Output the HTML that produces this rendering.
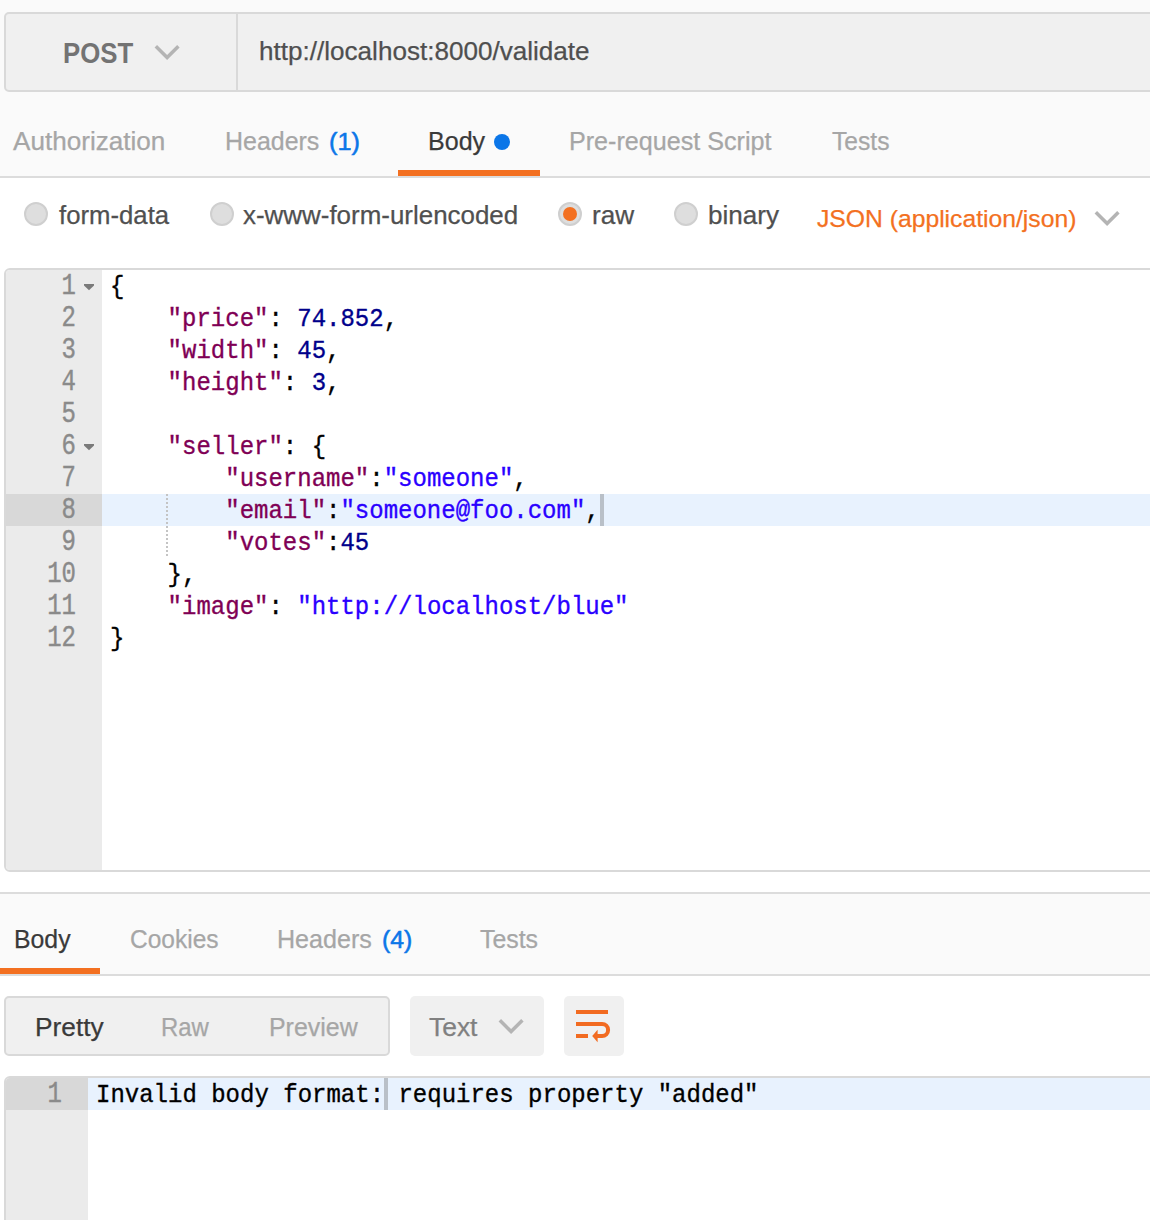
<!DOCTYPE html>
<html><head><meta charset="utf-8">
<style>
*{margin:0;padding:0;box-sizing:border-box}
html,body{width:1150px;height:1220px;overflow:hidden;background:#fff;font-family:"Liberation Sans",sans-serif}
.a{position:absolute}
.t{position:absolute;white-space:pre;line-height:1;transform-origin:0 0;-webkit-text-stroke:0.25px}
.rad{position:absolute;width:24px;height:24px;border-radius:50%;background:#dedede;border:2px solid #cfcfcf}
.code{position:absolute;font-family:"Liberation Mono",monospace;font-size:26px;line-height:32px;white-space:pre;color:#000;transform:scaleX(0.9231);transform-origin:0 0;-webkit-text-stroke:0.35px}
.k{color:#7f0055}.n{color:#00008b}.s{color:#2a00ff}
.ln{position:absolute;font-family:"Liberation Mono",monospace;font-size:29px;line-height:32px;white-space:pre;color:#8a8a8a;text-align:right;transform:scaleX(0.8276);transform-origin:100% 0;-webkit-text-stroke:0.4px}
</style></head><body>
<div class="a" style="left:0;top:0;width:1150px;height:176px;background:#fafafa"></div>
<div class="a" style="left:0;top:176px;width:1150px;height:2px;background:#dcdcdc"></div>
<div class="a" style="left:4px;top:12px;width:1200px;height:80px;background:#f0f0f0;border:2px solid #d9d9d9;border-radius:5px"></div>
<div class="a" style="left:236px;top:14px;width:2px;height:76px;background:#d9d9d9"></div>
<svg class="a" style="left:154px;top:44px" width="28" height="18" viewBox="0 0 28 18"><polyline points="1.8,2.3 13.1,13.6 24.4,2.3" fill="none" stroke="#b4b4b4" stroke-width="3.5"/></svg>
<div class="a" style="left:494px;top:134px;width:16px;height:16px;border-radius:50%;background:#0b76e8"></div>
<div class="a" style="left:398px;top:170px;width:142px;height:6px;background:#f37021"></div>
<div class="rad" style="left:24px;top:202px"></div>
<div class="rad" style="left:210px;top:202px"></div>
<div class="rad" style="left:558px;top:202px"></div>
<div class="a" style="left:562.75px;top:206.75px;width:14.5px;height:14.5px;border-radius:50%;background:#f37021"></div>
<div class="rad" style="left:674px;top:202px"></div>
<svg class="a" style="left:1094px;top:210px" width="28" height="18" viewBox="0 0 28 18"><polyline points="1.8,2.3 13.1,13.6 24.4,2.3" fill="none" stroke="#b4b4b4" stroke-width="3.5"/></svg>
<div class="a" style="left:4px;top:268px;width:1200px;height:604px;border:2px solid #d9d9d9;border-radius:6px;background:#fff;overflow:hidden">
  <div class="a" style="left:0;top:0;width:96px;height:600px;background:#ebebeb"></div>
  <div class="a" style="left:0;top:224px;width:96px;height:32px;background:#d8d8d8"></div>
  <div class="a" style="left:96px;top:224px;width:1100px;height:32px;background:#e8f2fe"></div>
</div>
<div class="ln" style="left:6px;top:270.5px;width:70px">1
2
3
4
5
6
7
8
9
10
11
12</div>
<svg class="a" style="left:83px;top:284px" width="11" height="7"><polygon points="1,0 11,0 11,1.6 6,6.2 1,1.6" fill="#7a7a7a"/></svg>
<svg class="a" style="left:83px;top:444px" width="11" height="7"><polygon points="1,0 11,0 11,1.6 6,6.2 1,1.6" fill="#7a7a7a"/></svg>
<div class="a" style="left:166px;top:494px;width:2px;height:62px;background:repeating-linear-gradient(to bottom,#c4c4c4 0,#c4c4c4 2px,transparent 2px,transparent 4px)"></div>
<div class="code" style="left:110px;top:271px">{
    <span class="k">"price"</span>: <span class="n">74.852</span>,
    <span class="k">"width"</span>: <span class="n">45</span>,
    <span class="k">"height"</span>: <span class="n">3</span>,

    <span class="k">"seller"</span>: {
        <span class="k">"username"</span>:<span class="s">"someone"</span>,
        <span class="k">"email"</span>:<span class="s">"someone@foo.com"</span>,
        <span class="k">"votes"</span>:<span class="n">45</span>
    },
    <span class="k">"image"</span>: <span class="s">"http://localhost/blue"</span>
}</div>
<div class="a" style="left:600px;top:494px;width:4px;height:32px;background:#b9c0c8"></div>
<div class="a" style="left:0;top:892px;width:1150px;height:2px;background:#dcdcdc"></div>
<div class="a" style="left:0;top:894px;width:1150px;height:80px;background:#fafafa"></div>
<div class="a" style="left:0;top:974px;width:1150px;height:2px;background:#dcdcdc"></div>
<div class="a" style="left:0;top:968px;width:100px;height:6px;background:#f37021"></div>
<div class="a" style="left:4px;top:996px;width:386px;height:60px;background:#f0f0f0;border:2px solid #d9d9d9;border-radius:5px"></div>
<div class="a" style="left:410px;top:996px;width:134px;height:60px;background:#f0f0f0;border-radius:5px"></div>
<svg class="a" style="left:498px;top:1018px" width="28" height="18" viewBox="0 0 28 18"><polyline points="1.8,2.3 13.1,13.6 24.4,2.3" fill="none" stroke="#b4b4b4" stroke-width="3.5"/></svg>
<div class="a" style="left:564px;top:996px;width:60px;height:60px;background:#f0f0f0;border-radius:5px"></div>
<svg class="a" style="left:564px;top:996px" width="60" height="60" viewBox="0 0 60 60">
  <rect x="12" y="14" width="32" height="4" fill="#f26b21"/>
  <path d="M12 28 H38.1 A6 6 0 0 1 38.1 40 H32" fill="none" stroke="#f26b21" stroke-width="4"/>
  <rect x="12" y="38" width="12" height="4" fill="#f26b21"/>
  <polygon points="28.2,40 33.6,33.8 33.6,46.2" fill="#f26b21"/>
</svg>
<div class="a" style="left:4px;top:1076px;width:1200px;height:200px;border:2px solid #d9d9d9;border-radius:6px;background:#fff;overflow:hidden">
  <div class="a" style="left:0;top:0;width:82px;height:200px;background:#ebebeb"></div>
  <div class="a" style="left:0;top:0;width:82px;height:32px;background:#d8d8d8"></div>
  <div class="a" style="left:82px;top:0;width:1100px;height:32px;background:#e8f2fe"></div>
</div>
<div class="ln" style="left:6px;top:1078.5px;width:56px">1</div>
<div class="code" style="left:96px;top:1079px">Invalid body format: requires property "added"</div>
<div class="a" style="left:384px;top:1078px;width:4px;height:32px;background:#b9c0c8"></div>
<div class="t" id="post" style="left:62.75px;top:39.45px;font-size:29px;font-weight:bold;color:#737373;transform:scaleX(0.8897);-webkit-text-stroke:0">POST</div>
<div class="t" id="url" style="left:258.59px;top:37.99px;font-size:26px;font-weight:normal;color:#4f4f4f;transform:scaleX(1.0031)">http://localhost:8000/validate</div>
<div class="t" id="auth" style="left:13.40px;top:129.41px;font-size:25.5px;font-weight:normal;color:#a6a6a6;transform:scaleX(1.0238)">Authorization</div>
<div class="t" id="hdr1" style="left:225.45px;top:129.41px;font-size:25.5px;font-weight:normal;color:#a6a6a6;transform:scaleX(0.9786)">Headers</div>
<div class="t" id="hdr1n" style="left:328.96px;top:131.03px;font-size:23px;font-weight:normal;color:#0b76e8;transform:scaleX(1.0977);-webkit-text-stroke:0.5px">(1)</div>
<div class="t" id="body1" style="left:427.64px;top:129.41px;font-size:25.5px;font-weight:normal;color:#3a3a3a;transform:scaleX(0.9821)">Body</div>
<div class="t" id="pre" style="left:569.43px;top:129.41px;font-size:25.5px;font-weight:normal;color:#a6a6a6;transform:scaleX(0.9852)">Pre-request Script</div>
<div class="t" id="tests1" style="left:832.20px;top:129.41px;font-size:25.5px;font-weight:normal;color:#a6a6a6;transform:scaleX(0.9658)">Tests</div>
<div class="t" id="fd" style="left:58.59px;top:203.41px;font-size:25.5px;font-weight:normal;color:#505050;transform:scaleX(1.0092)">form-data</div>
<div class="t" id="xw" style="left:243.39px;top:203.41px;font-size:25.5px;font-weight:normal;color:#505050;transform:scaleX(1.0168)">x-www-form-urlencoded</div>
<div class="t" id="raw" style="left:591.55px;top:203.41px;font-size:25.5px;font-weight:normal;color:#505050;transform:scaleX(1.0259)">raw</div>
<div class="t" id="bin" style="left:707.57px;top:203.41px;font-size:25.5px;font-weight:normal;color:#505050;transform:scaleX(1.0222)">binary</div>
<div class="t" id="json" style="left:816.60px;top:207.26px;font-size:24.5px;font-weight:normal;color:#f37021;transform:scaleX(1.0078)">JSON (application/json)</div>
<div class="t" id="body2" style="left:13.86px;top:927.41px;font-size:25.5px;font-weight:normal;color:#3a3a3a;transform:scaleX(0.9734)">Body</div>
<div class="t" id="cook" style="left:130.06px;top:927.41px;font-size:25.5px;font-weight:normal;color:#a6a6a6;transform:scaleX(0.9611)">Cookies</div>
<div class="t" id="hdr2" style="left:277.44px;top:927.41px;font-size:25.5px;font-weight:normal;color:#a6a6a6;transform:scaleX(0.9839)">Headers</div>
<div class="t" id="hdr2n" style="left:382.13px;top:929.03px;font-size:23px;font-weight:normal;color:#0b76e8;transform:scaleX(1.0760);-webkit-text-stroke:0.5px">(4)</div>
<div class="t" id="tests2" style="left:480.01px;top:927.41px;font-size:25.5px;font-weight:normal;color:#a6a6a6;transform:scaleX(0.9743)">Tests</div>
<div class="t" id="pretty" style="left:34.91px;top:1014.91px;font-size:25.5px;font-weight:normal;color:#3a3a3a;transform:scaleX(1.0313)">Pretty</div>
<div class="t" id="rawb" style="left:161.14px;top:1014.91px;font-size:25.5px;font-weight:normal;color:#a6a6a6;transform:scaleX(0.9381)">Raw</div>
<div class="t" id="prev" style="left:268.65px;top:1014.91px;font-size:25.5px;font-weight:normal;color:#a6a6a6;transform:scaleX(0.9774)">Preview</div>
<div class="t" id="text" style="left:429.14px;top:1014.84px;font-size:25px;font-weight:normal;color:#808080;transform:scaleX(1.0564)">Text</div>
</body></html>
